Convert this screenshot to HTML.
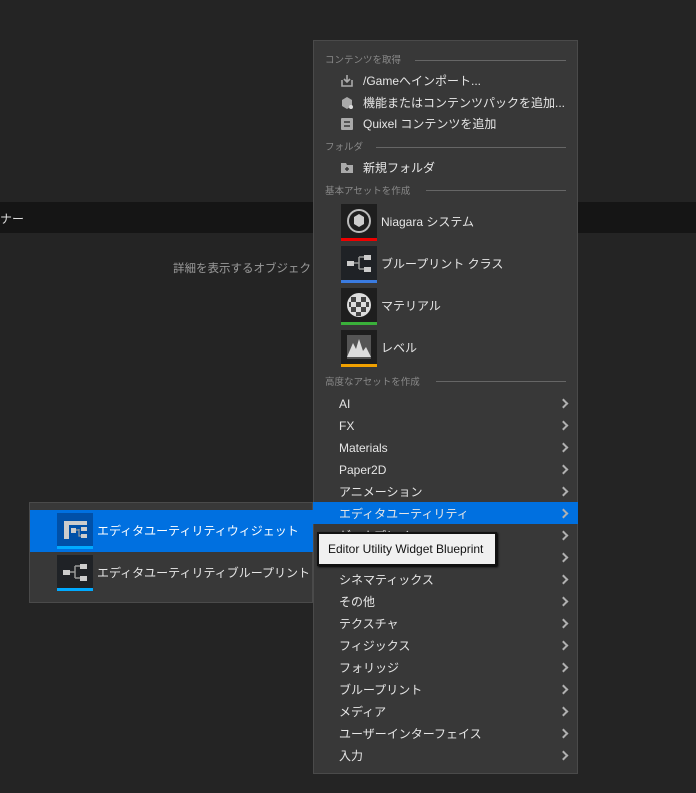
<!DOCTYPE html>
<html><head><meta charset="utf-8"><style>
*{margin:0;padding:0;box-sizing:border-box}
body{width:696px;height:793px;background:#242424;position:relative;overflow:hidden;font-family:"Liberation Sans","Noto Sans CJK JP",sans-serif;color:#e0e0e0;font-size:12px;line-height:15px}
.a{position:absolute;white-space:nowrap}
.bar{left:0;top:202px;width:696px;height:31px;background:#151515}
.menu{left:313px;top:40px;width:265px;height:734px;background:#383838;border:1px solid #4a4a4a}
.hdr{font-size:9.5px;color:#8a8a8a;left:325px}
.line{height:1px;background:#666}
.it{left:363px;color:#e6e6e6}
.sm{left:339px;color:#e6e6e6}
.chev{left:560px;width:7px;height:7px;border-right:2px solid #b0b0b0;border-top:2px solid #b0b0b0;transform:rotate(45deg)}
.ic{left:341px;width:36px;height:34px;background:#1e1e1e}
.ic i{position:absolute;left:0;bottom:-3px;width:36px;height:3px}
</style></head><body>
<div class="a bar"></div>
<div class="a" style="left:0;top:212px;color:#ddd">ナー</div>
<div class="a" style="left:173px;top:262px;color:#9a9a9a;font-size:11.5px">詳細を表示するオブジェクトを</div>

<div class="a menu"></div>
<div class="a hdr" style="top:53px">コンテンツを取得</div><div class="a line" style="left:415px;top:60px;width:151px"></div>
<svg class="a" style="left:340px;top:74px" width="14" height="14"><path d="M2 6v6h10V6M7 1v7M4 5l3 3 3-3" stroke="#aaa" stroke-width="1.6" fill="none"/></svg>
<div class="a it" style="top:74px">/Gameへインポート...</div>
<svg class="a" style="left:340px;top:96px" width="14" height="14"><path d="M2 4l5-3 5 3v6l-5 3-5-3z" fill="#aaa"/><circle cx="11" cy="11" r="2" fill="#ddd"/></svg>
<div class="a it" style="top:96px">機能またはコンテンツパックを追加...</div>
<svg class="a" style="left:340px;top:117px" width="14" height="14"><rect x="1" y="1" width="12" height="12" rx="1" fill="#aaa"/><path d="M4 5h6M4 9h6" stroke="#383838" stroke-width="1.5"/></svg>
<div class="a it" style="top:117px">Quixel コンテンツを追加</div>
<div class="a hdr" style="top:140px">フォルダ</div><div class="a line" style="left:376px;top:147px;width:190px"></div>
<svg class="a" style="left:340px;top:161px" width="14" height="13"><path d="M1 2h5l1 2h6v8H1z" fill="#aaa"/><path d="M7 6v4M5 8h4" stroke="#383838" stroke-width="1.5"/></svg>
<div class="a it" style="top:161px">新規フォルダ</div>
<div class="a hdr" style="top:184px">基本アセットを作成</div><div class="a line" style="left:426px;top:190px;width:140px"></div>

<div class="a ic" style="top:204px"><svg width="36" height="34"><circle cx="18" cy="17" r="11" fill="none" stroke="#bbb" stroke-width="2"/><path d="M13 13l5-3 5 3v7l-5 3-5-3z" fill="#ccc"/></svg><i style="background:#e00"></i></div>
<div class="a it" style="left:381px;top:215px">Niagara システム</div>
<div class="a ic" style="top:246px;background:#1f2226"><svg width="36" height="34"><rect x="6" y="15" width="7" height="5" fill="#ccc"/><rect x="23" y="9" width="7" height="5" fill="#ccc"/><rect x="23" y="21" width="7" height="5" fill="#ccc"/><path d="M13 17h5M18 11v12M18 11h5M18 23h5" stroke="#999" stroke-width="1.5" fill="none"/></svg><i style="background:#3a7be0"></i></div>
<div class="a it" style="left:381px;top:257px">ブループリント クラス</div>
<div class="a ic" style="top:288px"><svg width="36" height="34"><circle cx="18" cy="17" r="12" fill="#ddd"/><path d="M10 9h5v5h-5zM20 9h5v5h-5zM15 14h5v5h-5zM25 14h3v5h-3zM8 14h2v5H8zM10 19h5v5h-5zM20 19h5v5h-5zM15 24h5v4h-5z" fill="#444"/></svg><i style="background:#3ab03a"></i></div>
<div class="a it" style="left:381px;top:299px">マテリアル</div>
<div class="a ic" style="top:330px"><svg width="36" height="34"><rect x="6" y="5" width="24" height="24" fill="#555"/><path d="M6 27l6-14 3 6 3-10 4 12 3-4 5 10z" fill="#ddd"/></svg><i style="background:#f0a000"></i></div>
<div class="a it" style="left:381px;top:341px">レベル</div>

<div class="a hdr" style="top:375px">高度なアセットを作成</div><div class="a line" style="left:436px;top:381px;width:130px"></div>
<div class="a" style="left:313px;top:502px;width:265px;height:22px;background:#0070e0"></div>
<div class="a sm" style="top:397px">AI</div><div class="a chev" style="top:400px"></div>
<div class="a sm" style="top:419px">FX</div><div class="a chev" style="top:422px"></div>
<div class="a sm" style="top:441px">Materials</div><div class="a chev" style="top:444px"></div>
<div class="a sm" style="top:463px">Paper2D</div><div class="a chev" style="top:466px"></div>
<div class="a sm" style="top:485px">アニメーション</div><div class="a chev" style="top:488px"></div>
<div class="a sm" style="top:507px">エディタユーティリティ</div><div class="a chev" style="top:510px"></div>
<div class="a sm" style="top:529px">ゲームプレイ</div><div class="a chev" style="top:532px"></div>
<div class="a sm" style="top:551px">ブレンド</div><div class="a chev" style="top:554px"></div>
<div class="a sm" style="top:573px">シネマティックス</div><div class="a chev" style="top:576px"></div>
<div class="a sm" style="top:595px">その他</div><div class="a chev" style="top:598px"></div>
<div class="a sm" style="top:617px">テクスチャ</div><div class="a chev" style="top:620px"></div>
<div class="a sm" style="top:639px">フィジックス</div><div class="a chev" style="top:642px"></div>
<div class="a sm" style="top:661px">フォリッジ</div><div class="a chev" style="top:664px"></div>
<div class="a sm" style="top:683px">ブループリント</div><div class="a chev" style="top:686px"></div>
<div class="a sm" style="top:705px">メディア</div><div class="a chev" style="top:708px"></div>
<div class="a sm" style="top:727px">ユーザーインターフェイス</div><div class="a chev" style="top:730px"></div>
<div class="a sm" style="top:749px">入力</div><div class="a chev" style="top:752px"></div>

<div class="a" style="left:29px;top:502px;width:284px;height:101px;background:#383838;border:1px solid #4a4a4a"></div>
<div class="a" style="left:30px;top:510px;width:283px;height:42px;background:#0070e0"></div>
<div class="a" style="left:57px;top:513px;width:36px;height:33px;background:#0050a8"><svg width="36" height="33"><rect x="7" y="8" width="5" height="18" fill="#ccc"/><rect x="12" y="8" width="18" height="4" fill="#ccc"/><rect x="14" y="15" width="5" height="5" fill="#ccc"/><rect x="24" y="14" width="6" height="4" fill="#ccc"/><rect x="24" y="21" width="6" height="4" fill="#ccc"/><path d="M19 17h3M22 16v7h2" stroke="#999" stroke-width="1.2" fill="none"/></svg></div>
<div class="a" style="left:57px;top:546px;width:36px;height:3px;background:#00aaff"></div>
<div class="a" style="left:97px;top:524px;color:#fff">エディタユーティリティウィジェット</div>
<div class="a" style="left:57px;top:555px;width:36px;height:33px;background:#1f2226"><svg width="36" height="33"><rect x="6" y="15" width="7" height="5" fill="#ccc"/><rect x="23" y="9" width="7" height="5" fill="#ccc"/><rect x="23" y="21" width="7" height="5" fill="#ccc"/><path d="M13 17h5M18 11v12M18 11h5M18 23h5" stroke="#999" stroke-width="1.5" fill="none"/></svg></div>
<div class="a" style="left:57px;top:588px;width:36px;height:3px;background:#00aaff"></div>
<div class="a" style="left:97px;top:566px;color:#e6e6e6">エディタユーティリティブループリント</div>

<div class="a" style="left:317px;top:532px;width:180px;height:34px;background:#f0f0f0;border:2px solid #111;box-shadow:1px 1px 2px #000"></div>
<div class="a" style="left:328px;top:542px;color:#111;font-size:12px">Editor Utility Widget Blueprint</div>
</body></html>
